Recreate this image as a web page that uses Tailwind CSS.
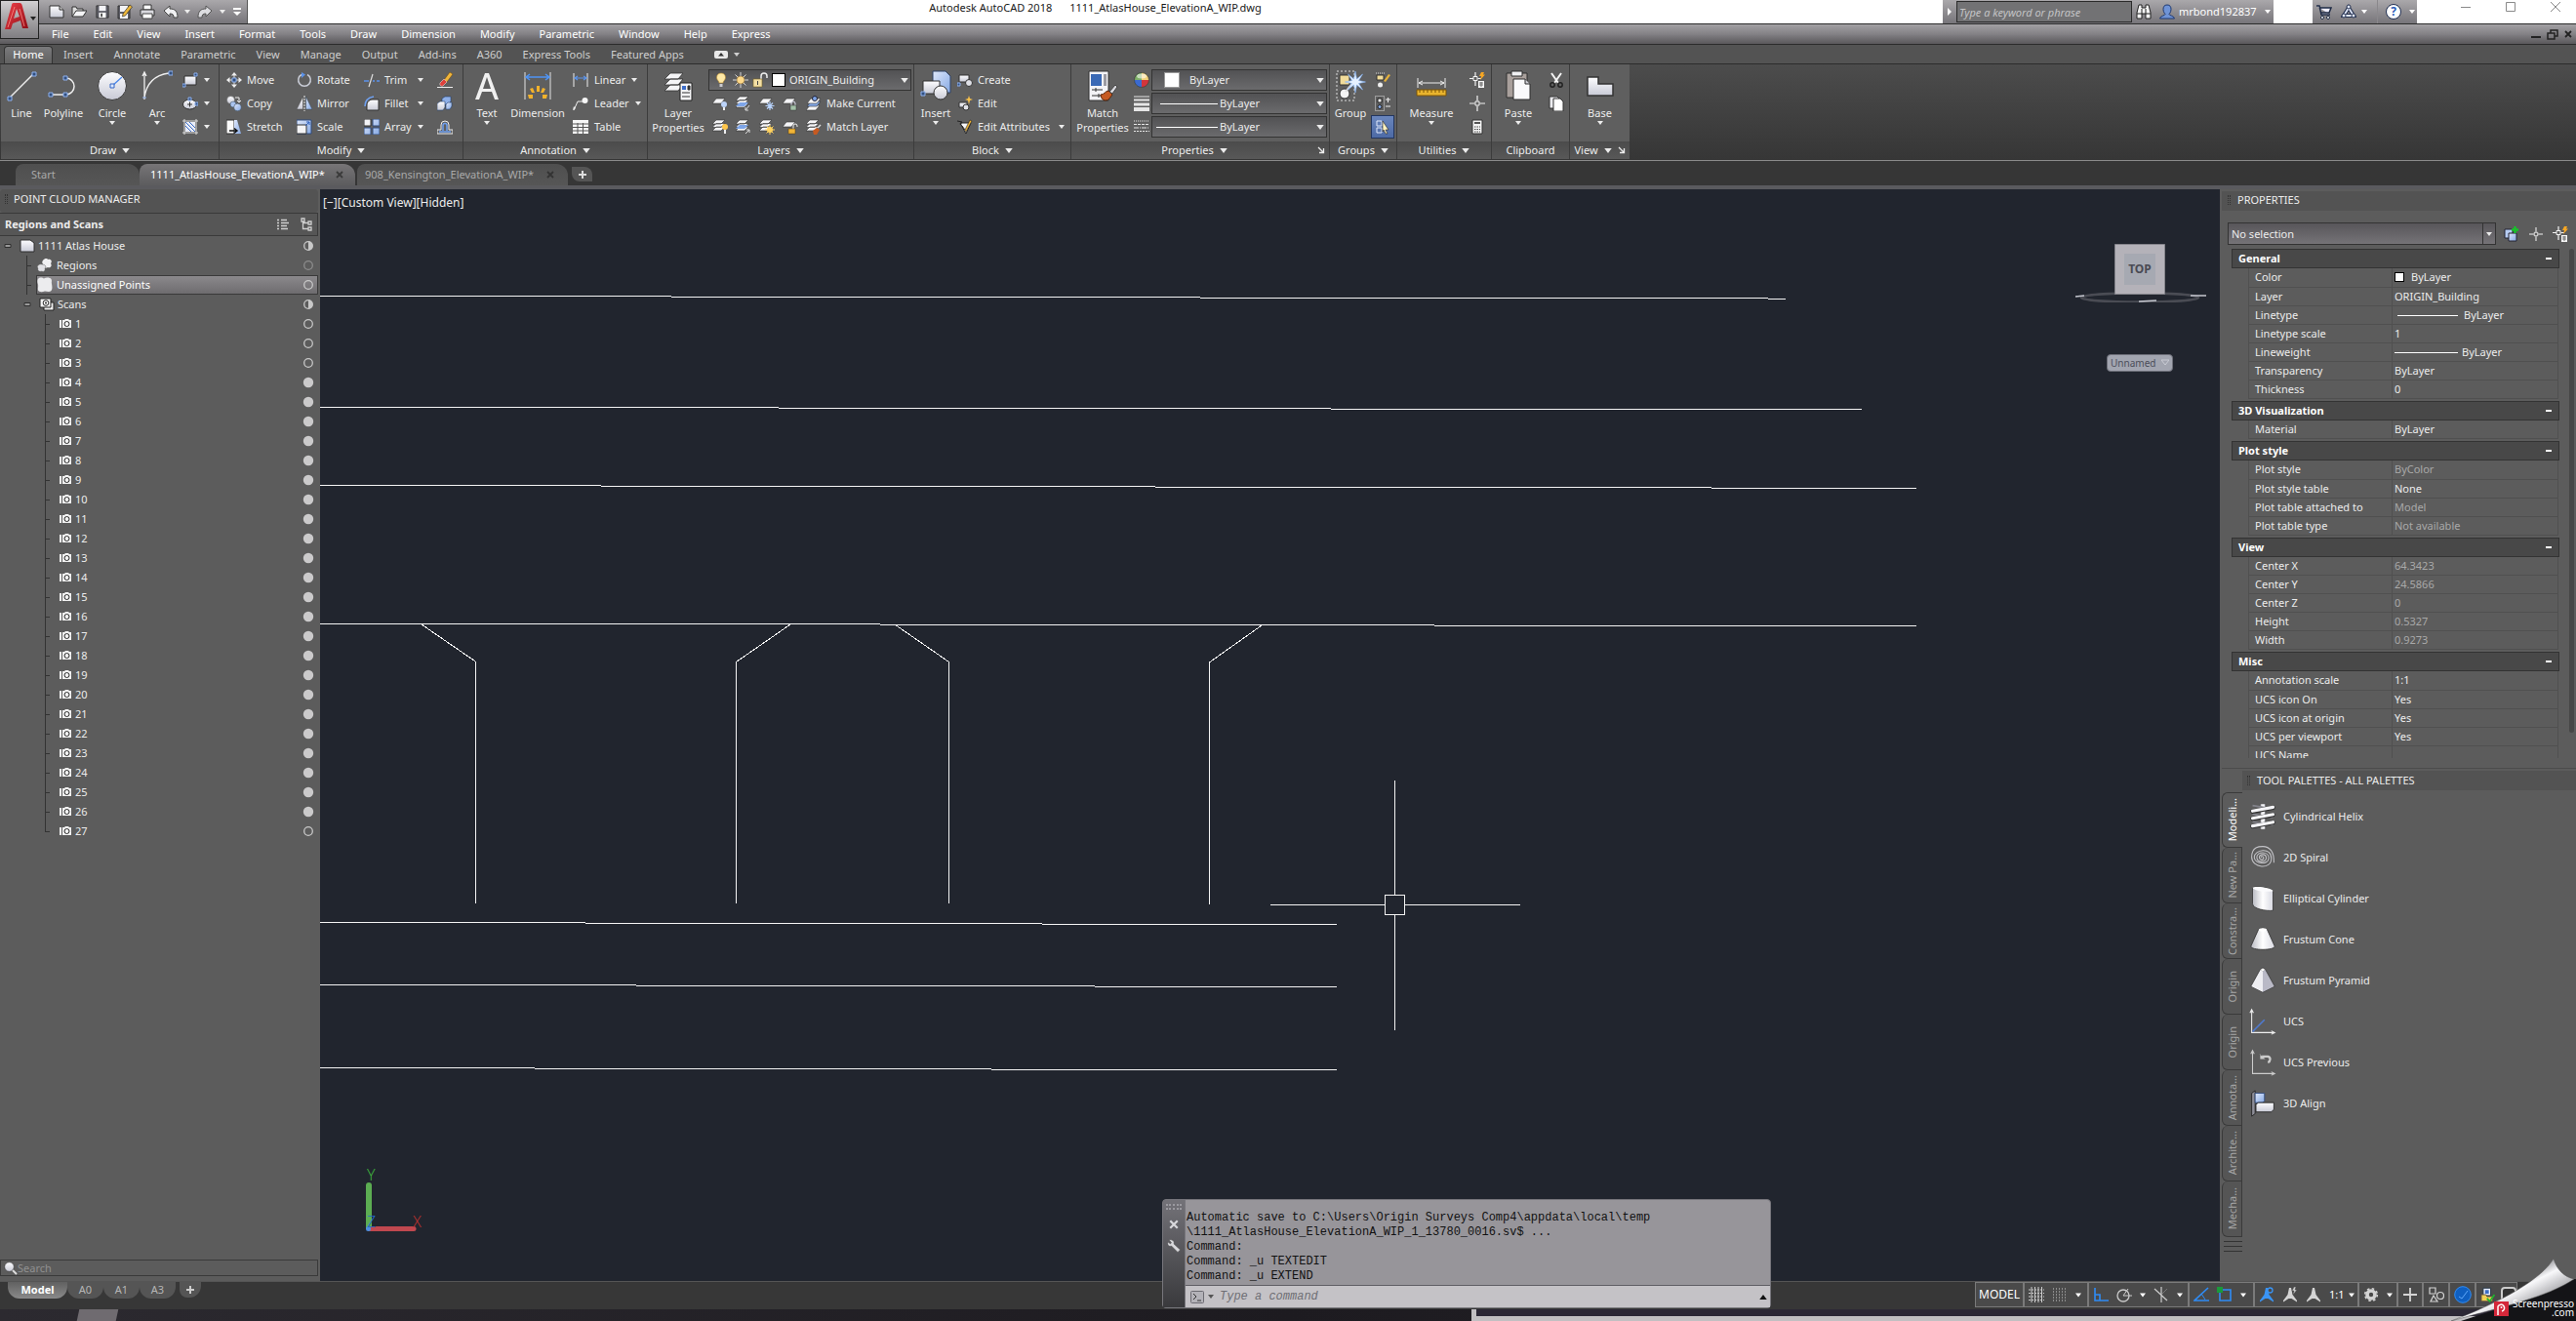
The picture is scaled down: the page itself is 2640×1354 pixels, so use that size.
<!DOCTYPE html>
<html lang="en">
<head>
    <meta charset="UTF-8">
    <meta name="viewport" content="width=device-width, initial-scale=1.0">
    <title>Autodesk AutoCAD 2018 - 1111_AtlasHouse_ElevationA_WIP.dwg</title>
    <script src="https://cdn.jsdelivr.net/npm/@tailwindcss/browser@4"></script>
</head>
<body class="flex h-screen flex-col overflow-hidden bg-[#5c5c5c] font-['Noto_Sans','Open_Sans',sans-serif] text-[11px] leading-4 text-[#ececec]">

    <!-- Icon sprite -->
    <svg class="absolute size-0" aria-hidden="true">
        <defs>
            <linearGradient id="gW" x1="0" y1="0" x2="0" y2="1"><stop offset="0" stop-color="#fdfdff"/><stop offset="1" stop-color="#c8cad6"/></linearGradient>
            <linearGradient id="gB" x1="0" y1="0" x2="1" y2="1"><stop offset="0" stop-color="#dfe8fb"/><stop offset="1" stop-color="#86a9e4"/></linearGradient>
            <linearGradient id="gH" x1="0" y1="0" x2="1" y2="0"><stop offset="0" stop-color="#b9bac2"/><stop offset=".5" stop-color="#fff"/><stop offset="1" stop-color="#d8d9e2"/></linearGradient>
            <linearGradient id="gR" x1="0" y1="0" x2="1" y2="1"><stop offset="0" stop-color="#f04048"/><stop offset="1" stop-color="#8e0d16"/></linearGradient>
            <linearGradient id="gC" x1="0" y1="0" x2="1" y2="1"><stop offset="0" stop-color="#6f6f73"/><stop offset=".4" stop-color="#8f8f93"/><stop offset=".52" stop-color="#f8f8fa"/><stop offset=".7" stop-color="#a9a9ad"/><stop offset="1" stop-color="#e8e8ea"/></linearGradient>
        </defs>
        <symbol id="arrow" viewBox="0 0 6 4"><path d="M0 0h6L3 4z" fill="currentColor"/></symbol>
        <symbol id="launch" viewBox="0 0 8 8"><path d="M1 1l5 5M6.500 2v4.500h-4.500" fill="none" stroke="currentColor" stroke-width="1.300"/></symbol>
        <symbol id="close" viewBox="0 0 8 8"><path d="M1 1l6 6M7 1l-6 6" stroke="currentColor" stroke-width="1.800"/></symbol>

        <!-- quick access -->
        <symbol id="new" viewBox="0 0 16 16"><path d="M1 2h10l4 4v8H1z" fill="url(#gW)" stroke="#333"/><path d="M11 2v4h4" fill="#ccc" stroke="#333"/></symbol>
        <symbol id="open" viewBox="0 0 16 16"><path d="M1 13V3h4l1 2h6v2" fill="#ddd" stroke="#333"/><path d="M1 13L5 7h11l-4 6z" fill="#f4f4f6" stroke="#333"/></symbol>
        <symbol id="save" viewBox="0 0 16 16"><path d="M1 1h14v14H1z" fill="#5d5d66" stroke="#333"/><path d="M4 1h8v6H4z" fill="#f3f3f6"/><path d="M4 9h8v6H4z" fill="#fff"/><path d="M6 10h2v4H6z" fill="#444"/></symbol>
        <symbol id="saveas" viewBox="0 0 16 16"><path d="M1 2h12v13H1z" fill="#5d5d66" stroke="#333"/><path d="M3 2h8v6H3zM3 10h8v5H3z" fill="#f3f3f6"/><path d="M6 10l7-9 2.500 2-7 9-3 1z" fill="#ecb63a" stroke="#333" stroke-width=".7"/></symbol>
        <symbol id="print" viewBox="0 0 16 16"><path d="M4 1h8v5H4z" fill="#fff" stroke="#333"/><path d="M1 6h14v6H1z" fill="#d9d9de" stroke="#333"/><path d="M3 10h10v5H3z" fill="#fff" stroke="#444"/></symbol>
        <symbol id="undo" viewBox="0 0 16 16"><path d="M1 7l6-5v3c5 0 8 2 8 9h-4c0-3-1-4-4-4v3z" fill="#f0f0f2" stroke="#444"/></symbol>
        <symbol id="redo" viewBox="0 0 16 16"><path d="M15 7L9 2v3c-5 0-8 2-8 9h4c0-3 1-4 4-4v3z" fill="#dcdce0" stroke="#555"/></symbol>
        <symbol id="qatmore" viewBox="0 0 8 8"><path d="M0 0h8v2H0zM0 4h8L4 8z" fill="#fff"/></symbol>
        <symbol id="binoculars" viewBox="0 0 16 16"><path d="M3 1h3v3h4V1h3l2 8v6h-5v-5H6v5H1V9z" fill="#f4f4f4" stroke="#222"/><path d="M6 5v5M10 5v5M1 10h5M10 10h5" stroke="#222"/></symbol>
        <symbol id="user" viewBox="0 0 16 16"><path d="M8 1c3 0 4 2 4 4.500S10.500 10 10 10.500c0 1.500 5 1.500 5.500 4.500H.5c.5-3 5.500-3 5.500-4.500C5.500 10 4 8 4 5.500S5 1 8 1z" fill="#6f93d6" stroke="#1d3770"/></symbol>
        <symbol id="cart" viewBox="0 0 16 16"><path d="M0 2h3l2 9h9M4 4h11l-2 5H5" fill="#eef" stroke="#1e2a44" stroke-width="1.500"/><circle cx="6" cy="14" r="1.500" fill="#fff" stroke="#1e2a44"/><circle cx="12" cy="14" r="1.500" fill="#fff" stroke="#1e2a44"/></symbol>
        <symbol id="a360" viewBox="0 0 16 16"><path d="M8 4l5 8H3z" fill="none" stroke="#26324f" stroke-width="4"/><path d="M8 4l5 8H3z" fill="none" stroke="#dfe6f8" stroke-width="1.800"/><circle cx="8" cy="3" r="2" fill="#dfe6f8" stroke="#26324f"/><circle cx="3" cy="12" r="2" fill="#dfe6f8" stroke="#26324f"/><circle cx="13" cy="12" r="2" fill="#dfe6f8" stroke="#26324f"/></symbol>

        <!-- large ribbon icons -->
        <symbol id="line" viewBox="0 0 32 32"><path d="M4 28L28 4" stroke="#eee" stroke-width="1.500"/><path d="M2 27h4v4H2zM27 2h4v4h-4z" fill="#33507f" stroke="#8fb2f0"/></symbol>
        <symbol id="polyline" viewBox="0 0 32 32"><path d="M3 25h15c12 0 12-17 0-17" fill="none" stroke="#eee" stroke-width="1.500"/><path d="M1 23h4v4H1zM16 23h4v4h-4zM16 6h4v4h-4z" fill="#33507f" stroke="#8fb2f0"/></symbol>
        <symbol id="circle" viewBox="0 0 32 32"><circle cx="16" cy="16" r="14.500" fill="url(#gW)" stroke="#3b3b3b"/><path d="M16 16L26 7" stroke="#4a86e8" stroke-width="1.300"/><path d="M14 14h4v4h-4z" fill="#dce8ff" stroke="#3567c4"/></symbol>
        <symbol id="arc" viewBox="0 0 32 32"><path d="M3 30V3M1 6l2-4 2 4M3 28C5 14 13 5 28 3" fill="none" stroke="#eee" stroke-width="1.300"/><path d="M28 1h4v4h-4zM1 28h4" fill="#33507f" stroke="#8fb2f0"/></symbol>
        <symbol id="text" viewBox="0 0 32 32"><path d="M4 30L14 3h4l10 27h-4l-3-8H11l-3 8zM12 19h8L16 7z" fill="#f0f0f0"/></symbol>
        <symbol id="dimension" viewBox="0 0 32 32"><path d="M3 2v28M29 2v28" stroke="#e4e4e4"/><path d="M4 7h24M8 4L4 7l4 3M24 4l4 3-4 3" fill="none" stroke="#4f94f5" stroke-width="1.500"/><path d="M15 16h3v6h-3zM8 19l3-1 2 5-3 0zM24 19l-3-1-2 5 3 0zM6 25l5 0 0 4-4 0zM26 25l-5 0 0 4 4 0z" fill="#f2b22c"/></symbol>
        <symbol id="layerprops" viewBox="0 0 32 32"><path d="M8 3h13l-5 6H2zM8 9h13l-5 6H2zM8 15h13l-5 6H2z" fill="#f5f5f7" stroke="#333" stroke-width=".8"/><path d="M18 13h12v18H18z" fill="#f5f5f7" stroke="#222"/><path d="M20 16h4v4h-4z" fill="#3d6ec9"/><path d="M26 16h2v4h-2zM20 23h8M20 27h8" stroke="#333" fill="#333"/></symbol>
        <symbol id="insert" viewBox="0 0 32 32"><path d="M13 1h13l5 5v17H13z" fill="url(#gB)" stroke="#2f4266"/><path d="M3 11h17v13H3z" fill="url(#gW)" stroke="#333"/><circle cx="21" cy="23" r="7" fill="url(#gW)" stroke="#333"/><path d="M1 22h4v4H1z" fill="#33507f" stroke="#8fb2f0"/></symbol>
        <symbol id="matchprops" viewBox="0 0 32 32"><path d="M2 1h20v30H2z" fill="#f3f3f6" stroke="#333"/><path d="M4 4h11v12H4z" fill="#3a69b5"/><path d="M17 4h3v12h-3z" fill="#9a9aa2"/><path d="M5 20h11M5 26h11M9 18v4M12 24v4" stroke="#333"/><path d="M14 25c4 0 5-4 8-4l4 4c-2 2-3 6-7 6-3 0-5-3-5-6z" fill="#c65a22" stroke="#5b2609"/><path d="M23 22l6-7 2 2-5 7z" fill="#d9d9de" stroke="#444"/></symbol>
        <symbol id="group" viewBox="0 0 32 32"><path d="M2 1h18v30H2z" fill="none" stroke="#ddd" stroke-dasharray="2 2"/><path d="M5 5h10v10H5z" fill="#f1dc9a" stroke="#333"/><circle cx="10" cy="24" r="5" fill="#f4f4f4" stroke="#333"/><path d="M11 22l8-10" stroke="#ddd" stroke-width="2"/><path d="M21 1l1.500 8 6-5-4 6.500 7 1.500-7 1.500 4 6.500-6-5-1.500 8-1.500-8-6 5 4-6.500-7-1.500 7-1.500-4-6.500 6 5z" fill="#e6f1ff" stroke="#7fb0f5" stroke-width=".6"/></symbol>
        <symbol id="measure" viewBox="0 0 32 32"><path d="M2 8v10M30 8v10M3 13h26M7 11l-4 2 4 2M25 11l4 2-4 2" fill="none" stroke="#eee"/><path d="M1 20h30v6H1z" fill="#e9b42e" stroke="#7c5507"/><path d="M4 20v3M8 20v3M12 20v3M16 20v3M20 20v3M24 20v3M28 20v3" stroke="#7c5507"/></symbol>
        <symbol id="paste" viewBox="0 0 32 32"><path d="M4 3h21v25H4z" fill="#a9a09c" stroke="#2e2e2e"/><path d="M9 1h11v5H9z" fill="#f1f1f3" stroke="#2e2e2e"/><path d="M11 9h12l5 5v16H11z" fill="#fafafc" stroke="#2e2e2e"/><path d="M23 9v5h5" fill="#cfcfd6" stroke="#2e2e2e"/></symbol>
        <symbol id="base" viewBox="0 0 32 32"><path d="M3 7h11v7h15v12H3z" fill="url(#gW)" stroke="#333" stroke-width="1.500"/></symbol>

        <!-- small ribbon icons -->
        <symbol id="rect" viewBox="0 0 16 16"><path d="M2 4h12v9H2z" fill="url(#gW)" stroke="#2e2e2e"/><path d="M12 1h3v3h-3zM0 12h3v3H0z" fill="#33507f" stroke="#8fb2f0"/></symbol>
        <symbol id="ellipse" viewBox="0 0 16 16"><ellipse cx="7.500" cy="9" rx="7" ry="5" fill="url(#gW)" stroke="#2e2e2e"/><path d="M7.500 6.500v5M5 9h5" stroke="#333"/><path d="M6 2h3v3H6zM13 7h3v3h-3z" fill="#33507f" stroke="#8fb2f0"/></symbol>
        <symbol id="hatch" viewBox="0 0 16 16"><path d="M3 3h10v10H3z" fill="#e9edf8"/><path d="M3 7l6 6M3 3l10 10M7 3l6 6" stroke="#3b6cc5"/><path d="M2 0v16M14 0v16M0 2h16M0 14h16" stroke="#ddd"/></symbol>
        <symbol id="move" viewBox="0 0 16 16"><path d="M8 0l3 3.500H5zM8 16l3-3.500H5zM0 8l3.500-3v6zM16 8l-3.500-3v6z" fill="#eee"/><path d="M8 3v10M3 8h10" stroke="#ddd"/><path d="M6 6h4v4H6z" fill="#33507f" stroke="#8fb2f0"/></symbol>
        <symbol id="copy" viewBox="0 0 16 16"><circle cx="4.500" cy="4.500" r="4" fill="url(#gW)" stroke="#444" stroke-width=".5"/><circle cx="7" cy="9" r="3" fill="#a9c3ef" stroke="#345" stroke-width=".5"/><circle cx="11.500" cy="12" r="3.800" fill="url(#gB)" stroke="#345" stroke-width=".5"/><path d="M9 2h4v4M11 5l2 2 2-2" fill="none" stroke="#eee"/></symbol>
        <symbol id="stretch" viewBox="0 0 16 16"><path d="M0 1h8v14H0z" fill="#fafafa" stroke="#333"/><path d="M8 1l3 0 4 14H8z" fill="url(#gB)"/><path d="M3 12h7M8 9.500l3 2.500-3 2.500" stroke="#111" stroke-width="1.500" fill="none"/></symbol>
        <symbol id="rotate" viewBox="0 0 16 16"><path d="M11 2.500a6.300 6.300 0 1 1-6 0" fill="none" stroke="#c9ccd6" stroke-width="1.500"/><path d="M5 0l4 2.500L5 6z" fill="#5c93ea"/></symbol>
        <symbol id="mirror" viewBox="0 0 16 16"><path d="M6.500 1v13H0z" fill="url(#gW)" stroke="#444" stroke-width=".5"/><path d="M9.500 1v13H16z" fill="url(#gB)" stroke="#345" stroke-width=".5"/><path d="M8 0v16" stroke="#eee" stroke-dasharray="2 1"/></symbol>
        <symbol id="scale" viewBox="0 0 16 16"><path d="M0 1h15v14H0z" fill="url(#gB)" stroke="#2f4a7c"/><path d="M0 6h10v9H0z" fill="#f4f4f6" stroke="#333"/><path d="M9 7l4-4M10 3h3v3" stroke="#2a5dbb" fill="none"/></symbol>
        <symbol id="trim" viewBox="0 0 16 16"><path d="M0 9h5M9 9h2M13 9h3" stroke="#5c93ea" stroke-width="1.500"/><path d="M9 2L5 15" stroke="#ddd" stroke-width="1.200"/></symbol>
        <symbol id="fillet" viewBox="0 0 16 16"><path d="M3 15V10c0-4 3-6 6-6h6v11z" fill="url(#gW)" stroke="#333"/><path d="M1 11c0-6 3-9 9-10" fill="none" stroke="#6fa0f0" stroke-width="1.500"/></symbol>
        <symbol id="array" viewBox="0 0 16 16"><path d="M0 0h7v7H0z" fill="#f3f3f6" stroke="#333"/><path d="M9 0h7v7H9zM0 9h7v7H0zM9 9h7v7H9z" fill="url(#gB)" stroke="#2f4a7c"/></symbol>
        <symbol id="erase" viewBox="0 0 16 16"><path d="M7 8l6-8 3 2-6 8z" fill="#f0b63c" stroke="#6d4408" stroke-width=".5"/><path d="M3 11l4-4 3 3-4 4c-2 1-4-1-3-3z" fill="#e0403a" stroke="#eee" stroke-width=".5"/><path d="M0 15.500h16" stroke="#eee"/></symbol>
        <symbol id="explode" viewBox="0 0 16 16"><path d="M5 3l3-2h6v5l-3 3H5z" fill="#8fb0e8" stroke="#24406f" stroke-width=".6"/><path d="M0 8l3-2h5v6l-2 3H0z" fill="url(#gW)" stroke="#24406f" stroke-width=".6"/><path d="M9 9l2-2h4v4l-2 3H9z" fill="url(#gB)" stroke="#24406f" stroke-width=".6"/></symbol>
        <symbol id="offset" viewBox="0 0 16 16"><path d="M0 15h16v-4h-4V6a4 4 0 0 0-8 0v5H0z" fill="none" stroke="#eee"/><path d="M2 13h12M6 12V6.500a2 2 0 0 1 4 0V12" fill="none" stroke="#6fa0f0" stroke-width="1.500"/></symbol>
        <symbol id="linear" viewBox="0 0 16 16"><path d="M1 1v14M15 1v14" stroke="#eee"/><path d="M2 6h12M5 4L2 6l3 2M11 4l3 2-3 2" fill="none" stroke="#5c93ea" stroke-width="1.200"/></symbol>
        <symbol id="leader" viewBox="0 0 16 16"><path d="M1 15L5 6h5" fill="none" stroke="#eee"/><circle cx="12.500" cy="5" r="3" fill="#f6f6f6"/><path d="M0 15l1-4 2 2z" fill="#eee"/></symbol>
        <symbol id="table" viewBox="0 0 16 16"><path d="M0 1h16v14H0z" fill="#f7f7f7"/><path d="M0 5h16M0 8.500h16M0 12h16M5 4v11M10.500 4v11" stroke="#555"/></symbol>
        <symbol id="bulb" viewBox="0 0 16 16"><path d="M8 1c3 0 4.500 2 4.500 4.500S10 9 10 11H6c0-2-2.500-3-2.500-5.500S5 1 8 1z" fill="#ffe9a6" stroke="#b88a2c" stroke-width=".6"/><path d="M6.500 12h3v3h-3z" fill="#c9c9cf"/></symbol>
        <symbol id="sun" viewBox="0 0 16 16"><path d="M8 0v16M0 8h16M2.500 2.500l11 11M13.500 2.500l-11 11" stroke="#d8d8d8"/><circle cx="8" cy="8" r="4" fill="#ffd98a" stroke="#8a6a35" stroke-width=".6"/></symbol>
        <symbol id="unlock" viewBox="0 0 16 16"><path d="M9 8V4a3 3 0 0 1 6 0v2" fill="none" stroke="#eee" stroke-width="1.500"/><path d="M1 7h9v8H1z" fill="#f3dfa5" stroke="#7c6420" stroke-width=".6"/><path d="M5 9h1v4H5z" fill="#444"/></symbol>
        <symbol id="sheet" viewBox="0 0 16 16"><path d="M4 3h9l-4 5H0z" fill="#f5f5f7" stroke="#333" stroke-width=".6"/></symbol>
        <symbol id="sheets" viewBox="0 0 16 16"><path d="M4 8h9l-4 4H0zM4 4.500h9l-4 4H0zM4 1h9L9 5H0z" fill="#f5f5f7" stroke="#333" stroke-width=".6"/></symbol>
        <symbol id="lay1" viewBox="0 0 16 16"><use href="#sheet"/><circle cx="12" cy="9" r="3" fill="#bcd3f8"/><path d="M11 12h2v3h-2z" fill="#eee"/></symbol>
        <symbol id="lay2" viewBox="0 0 16 16"><use href="#sheets"/><path d="M4 7h9l-4 4H0z" fill="#7ea5e8"/><path d="M14 10l-4 5M10 12v3h3" fill="none" stroke="#ddd"/></symbol>
        <symbol id="lay3" viewBox="0 0 16 16"><use href="#sheet"/><path d="M11 6v9M6.500 10.500h9M8 7.500l6 6M14 7.500l-6 6" stroke="#b7d2fb" stroke-width="1.200"/></symbol>
        <symbol id="lay4" viewBox="0 0 16 16"><use href="#sheet"/><path d="M9 10V8a2 2 0 0 1 4 0v2" fill="none" stroke="#dde"/><path d="M8 10h6v5H8z" fill="#a3c0a8" stroke="#333" stroke-width=".5"/></symbol>
        <symbol id="lay5" viewBox="0 0 16 16"><path d="M4 10h10l-4 5H0z" fill="#f5f5f7" stroke="#333" stroke-width=".6"/><path d="M5 6h10l-4 5H1z" fill="#85a9e8" stroke="#333" stroke-width=".6"/><path d="M5 3h10l-4 5H1z" fill="#f5f5f7" stroke="#333" stroke-width=".6"/><circle cx="9" cy="3" r="2.500" fill="#7ea5e8" stroke="#223"/></symbol>
        <symbol id="lay6" viewBox="0 0 16 16"><use href="#sheets"/><circle cx="13" cy="8" r="3" fill="#ffc64a"/><path d="M12 11h2v4h-2z" fill="#eee"/></symbol>
        <symbol id="lay7" viewBox="0 0 16 16"><use href="#sheets"/><path d="M4 6h9l-4 4H0z" fill="#7ea5e8"/><path d="M10 15l4-4M11 11h3v3" fill="none" stroke="#ddd"/></symbol>
        <symbol id="lay8" viewBox="0 0 16 16"><use href="#sheets"/><path d="M11 6v10M6 11h10M7.500 7.500l7 7M14.500 7.500l-7 7" stroke="#ffd25e"/><circle cx="11" cy="11" r="3" fill="#ffd25e"/></symbol>
        <symbol id="lay9" viewBox="0 0 16 16"><use href="#sheet"/><path d="M11 10V7a2 2 0 0 1 4 0v1" fill="none" stroke="#eee"/><path d="M6 10h7v5H6z" fill="#f0b437" stroke="#5c3d05" stroke-width=".5"/></symbol>
        <symbol id="lay10" viewBox="0 0 16 16"><use href="#sheets"/><path d="M7 12l4-3 3 2-3 5H8z" fill="#c65a22"/><path d="M12 9l3-3" stroke="#ddd" stroke-width="1.500"/></symbol>
        <symbol id="blkcreate" viewBox="0 0 16 16"><path d="M2 3h10v7H2z" fill="url(#gW)" stroke="#333"/><circle cx="12" cy="11" r="3.500" fill="#dfe0e6" stroke="#333"/><path d="M0 11h3v3H0z" fill="#33507f" stroke="#8fb2f0"/></symbol>
        <symbol id="blkedit" viewBox="0 0 16 16"><path d="M2 7h8v5H2z" fill="url(#gW)" stroke="#333"/><circle cx="9" cy="12" r="3" fill="#dfe0e6" stroke="#333"/><path d="M12 0l1 3 3 1-3 1-1 4-1-4-3-1 3-1z" fill="#f7c14b"/></symbol>
        <symbol id="blkattr" viewBox="0 0 16 16"><path d="M3 4h11l-5 11z" fill="#f5f5f7" stroke="#222"/><path d="M5 7l3 4 5-10 2 1-6 11z" fill="#f0b437" stroke="#222" stroke-width=".6"/><path d="M0 2l5 1-2 3" fill="none" stroke="#222"/></symbol>
        <symbol id="wheel" viewBox="0 0 16 16"><circle cx="8" cy="8" r="7.500" fill="#7fb069"/><path d="M8 8V.5A7.500 7.500 0 0 1 15.500 8z" fill="#f3d27a"/><path d="M8 8h7.500A7.500 7.500 0 0 1 8 15.500z" fill="#d2353c"/><path d="M8 8v7.500A7.500 7.500 0 0 1 .5 8z" fill="#3b6ad0"/><ellipse cx="8" cy="4" rx="5" ry="2.500" fill="#fff" fill-opacity=".55"/><circle cx="8" cy="8" r="7.500" fill="none" stroke="#333" stroke-width=".6"/></symbol>
        <symbol id="weights" viewBox="0 0 16 16"><path d="M0 1h16" stroke="#e6e6e6"/><path d="M0 4.500h16" stroke="#e6e6e6" stroke-width="2"/><path d="M0 9h16" stroke="#e6e6e6" stroke-width="3"/><path d="M0 14h16" stroke="#e6e6e6" stroke-width="4"/></symbol>
        <symbol id="ltypes" viewBox="0 0 16 16"><path d="M0 2h16" stroke="#e6e6e6" stroke-dasharray="1 1"/><path d="M0 5.500h16" stroke="#e6e6e6" stroke-dasharray="3 1"/><path d="M0 9h16" stroke="#e6e6e6" stroke-dasharray="5 1 1 1"/><path d="M0 12.500h16" stroke="#e6e6e6" stroke-dasharray="2 1"/></symbol>
        <symbol id="grp1" viewBox="0 0 16 16"><path d="M1 1h9" stroke="#ddd" stroke-dasharray="1 1"/><path d="M2 3h7v5H2z" fill="#f1dc9a" stroke="#333"/><circle cx="5.500" cy="13" r="2.500" fill="#eee"/><path d="M9 9l5-7 2 1-5 7z" fill="#e5b13a"/></symbol>
        <symbol id="grp2" viewBox="0 0 16 16"><path d="M.5.5h9v15h-9z" fill="none" stroke="#ddd" stroke-dasharray="1 1"/><path d="M3 3h4v4H3z" fill="#eee" stroke="#222"/><circle cx="5" cy="11.500" r="2" fill="#86a9e4" stroke="#222"/><path d="M11 4h5M13.500 2v5M11 11h5" stroke="#eee"/></symbol>
        <symbol id="grp3" viewBox="0 0 16 16"><path d="M2 2h5v5H2zM2 9h5v5H2z" fill="none" stroke="#dfe8fb"/><path d="M8 2l6 9-3 0 2 4-2 0-2-4-1 2z" fill="#fff3c2" stroke="#222" stroke-width=".6"/></symbol>
        <symbol id="qselect" viewBox="0 0 16 16"><path d="M6 0v4M6 9v5M0 6.500h4M8.500 6.500H12" stroke="#f2f2f2" stroke-width="1.200"/><path d="M4 4.500h4v4H4z" fill="none" stroke="#f2f2f2"/><path d="M9 9h6v7H9z" fill="#f5f5f5"/><path d="M10 11h4M10 13h4M12 10v5" stroke="#444" stroke-width=".7"/><path d="M12 0h3l-1 2.500h2L11 8l1-4h-2z" fill="#f6a623"/></symbol>
        <symbol id="pick" viewBox="0 0 16 16"><path d="M8 0v5.500M8 10.500V16M0 8h5.500M10.500 8H16" stroke="#f2f2f2" stroke-width="1.200"/><path d="M6 6h4v4H6z" fill="none" stroke="#f2f2f2"/></symbol>
        <symbol id="calc" viewBox="0 0 16 16"><path d="M3 1h10v14H3z" fill="#f3f3f3" stroke="#333"/><path d="M5 3h6v2H5z" fill="#555"/><path d="M5 8h6M5 10.500h6M5 13h6" stroke="#444" stroke-dasharray="1.500 1"/></symbol>
        <symbol id="cut" viewBox="0 0 16 16"><path d="M3 1l7 10M13 1L6 11" stroke="#f4f4f4" stroke-width="2"/><circle cx="4" cy="13" r="2.200" fill="none" stroke="#222" stroke-width="1.500"/><circle cx="12" cy="13" r="2.200" fill="none" stroke="#222" stroke-width="1.500"/></symbol>
        <symbol id="copyclip" viewBox="0 0 16 16"><path d="M1 1h8l2 2v10H1z" fill="#ececf0" stroke="#333"/><path d="M5 3h7l3 3v10H5z" fill="#fff" stroke="#333"/></symbol>

        <!-- palettes -->
        <symbol id="listview" viewBox="0 0 12 12"><path d="M0 1.500h2M0 4.500h2M0 7.500h2M0 10.500h2M4 1.500h6M4 4.500h8M4 7.500h6M4 10.500h7" stroke="#cfcfcf" stroke-width="1.600"/></symbol>
        <symbol id="treeview" viewBox="0 0 12 14"><path d="M1 1h3v3H1zM8 4h3v3H8zM8 10h3v3H8zM2.500 4v7.500H8M2.500 5.500H8" fill="none" stroke="#cfcfcf" stroke-width="1.300"/></symbol>
        <symbol id="scanfile" viewBox="0 0 16 14"><path d="M1 1h10l4 3v9H1z" fill="url(#gW)" stroke="#2e2e2e"/></symbol>
        <symbol id="regions" viewBox="0 0 16 16"><path d="M6 3c2-3 5-2 5-1 3-1 5 2 3 4 2 3-1 5-3 4-3 2-6 0-5-3-1-2-1-3 0-4z" fill="#f1f1f3"/><path d="M1 8c2-2 4-1 4-1 3 0 5 2 3 4 1 3-2 4-3 3-3 1-5-1-4-3-1-1-1-2 0-3z" fill="#e0e0e4" stroke="#555" stroke-width=".5"/></symbol>
        <symbol id="points" viewBox="0 0 16 16"><path d="M2 1c2-1 4 0 5 .5C9 0 13 0 14.500 2c1 2 0 3 .5 5 .5 3 1 6-1 7.500-2 1-4 0-6 0-3 1-6 1-7-1-.5-2 .5-4 0-6C0 5 0 2 2 1z" fill="#ececee"/></symbol>
        <symbol id="scans" viewBox="0 0 16 16"><path d="M5 6h10v8H5z" fill="#eee" stroke="#222"/><path d="M1 2h11v9H1z" fill="#f2f2f2" stroke="#222"/><circle cx="7" cy="6.500" r="2.800" fill="#fff" stroke="#222"/><circle cx="7" cy="6.500" r="1" fill="#222"/></symbol>
        <symbol id="scan" viewBox="0 0 12 12"><path d="M0 2h2v8H0zM3 2h2l1-1h3l1 1h2v8H3z" fill="#f2f2f2"/><circle cx="7.500" cy="6" r="2.500" fill="#f2f2f2" stroke="#2a2a2a"/></symbol>
        <symbol id="ringOff" viewBox="0 0 12 12"><circle cx="6" cy="6" r="4.300" fill="none" stroke="#c8c8c8" stroke-width="1.300"/></symbol>
        <symbol id="ringDim" viewBox="0 0 12 12"><circle cx="6" cy="6" r="4.300" fill="none" stroke="#8d8d8d" stroke-width="1.300"/></symbol>
        <symbol id="ringOn" viewBox="0 0 12 12"><circle cx="6" cy="6" r="5.200" fill="#cbcacb"/></symbol>
        <symbol id="ringHalf" viewBox="0 0 12 12"><circle cx="6" cy="6" r="4.300" fill="none" stroke="#c8c8c8" stroke-width="1.300"/><path d="M6 1.500a4.500 4.500 0 0 1 0 9z" fill="#c8c8c8"/></symbol>
        <symbol id="magnifier" viewBox="0 0 14 14"><circle cx="5.500" cy="5.500" r="4.800" fill="url(#gW)" stroke="#333" stroke-width=".6"/><path d="M9 9l4 4" stroke="#ddd" stroke-width="2"/></symbol>
        <symbol id="pickadd" viewBox="0 0 16 16"><path d="M1 3h8v9H1z" fill="#b7cdf3" stroke="#223"/><path d="M5 7h8v8H5z" fill="url(#gB)" stroke="#223"/><path d="M11.500 0v7M8 3.500h7" stroke="#17c22a" stroke-width="2.400"/></symbol>
        <symbol id="tHelix" viewBox="0 0 32 32"><path d="M13 1h6v30h-6z" fill="url(#gH)" stroke="#444" stroke-width=".6"/><path d="M4 3l24 4M4 13l24 4M4 22l24 4" stroke="#83838b" stroke-width="2"/><path d="M4 10l24-4.500M4 18.500L28 14M4 27.500L28 23" stroke="#2e2e2e" stroke-width="5" stroke-linecap="round"/><path d="M4 9.500L28 5M4 18L28 13.500M4 27L28 22.500" stroke="#f5f5f8" stroke-width="3.600" stroke-linecap="round"/></symbol>
        <symbol id="tSpiral" viewBox="0 0 32 32"><path d="M14 16c0-2 3-2 3 .5s-5 3-5-1 8-4.500 8 1-11 6-11-1S23 8 23 16.500 6 24 6 15.500 26 3 26 17 3 28 3 15.500 12 3 16 3M16 3c8 0 13.500 6 13 19" fill="none" stroke="#c4c4c8" stroke-width="1.200"/></symbol>
        <symbol id="tEllip" viewBox="0 0 32 32"><path d="M4 3c4-2 22 0 24 4v23C20 31 4 28 4 22z" fill="url(#gH)" stroke="#3c3c3c"/><path d="M4 3c4-2 22 0 24 4C20 9 6 7 4 3z" fill="#fbfbfd"/></symbol>
        <symbol id="tCone" viewBox="0 0 32 32"><path d="M11 4c2-2 8-2 10 0l9 20c0 5-28 5-28 0z" fill="url(#gH)" stroke="#333"/><ellipse cx="16" cy="4.500" rx="4.500" ry="2" fill="#fff"/></symbol>
        <symbol id="tPyramid" viewBox="0 0 32 32"><path d="M13 3L2 23l14 7V5z" fill="#eeeef2"/><path d="M19 3l11 20-14 7V5z" fill="#b9b9c6"/><path d="M13 3l3-2 3 2-3 2z" fill="#fff"/><path d="M13 3L2 23l14 7 14-7L19 3l-3-2z" fill="none" stroke="#333" stroke-width=".8"/></symbol>
        <symbol id="tUcs" viewBox="0 0 32 32"><path d="M3 3v26h26M1 6l2-4 2 4M26 27l4 2-4 2" fill="none" stroke="#eee" stroke-width="1.200"/><path d="M4 28L18 14" stroke="#4f7ad0" stroke-width="1.800"/></symbol>
        <symbol id="tUcsPrev" viewBox="0 0 32 32"><path d="M4 3v26h26M2 6l2-4 2 4M26 27l4 2-4 2" fill="none" stroke="#ccc" stroke-width="1.200"/><path d="M15 9h7c4 1 3 6 0 7" fill="none" stroke="#ccc" stroke-width="2.500"/><path d="M12 6h1v6h6z" fill="#ccc"/></symbol>
        <symbol id="tAlign" viewBox="0 0 32 32"><path d="M3 4l4-3v27l-4 3z" fill="#8e8e98" stroke="#222"/><path d="M7 4h11v9l-2 2H7z" fill="url(#gB)" stroke="#2f4a7c"/><path d="M8 17l3-2h18v8l-3 3H8z" fill="url(#gW)" stroke="#222"/></symbol>
        <symbol id="wrench" viewBox="0 0 14 14"><path d="M2 1l2.500 2.500L3.500 5 1 3c-1 3 1 5 3.500 4L11 13.500 13.500 11 7 5c1-3-2-5-5-4z" fill="#d8d8dc" stroke="#555" stroke-width=".5"/></symbol>

        <!-- status bar -->
        <symbol id="sGrid" viewBox="0 0 16 16"><path d="M3 0v16M6.500 0v16M10 0v16M13.500 0v16" stroke="#ccc"/><path d="M0 3h16M0 6.500h16M0 10h16M0 13.500h16" stroke="#ccc" stroke-dasharray="2 1"/></symbol>
        <symbol id="sSnap" viewBox="0 0 16 16"><path d="M1 2h15M1 5h15M1 8h15M1 11h15M1 14h15" stroke="#ccc" stroke-dasharray="1 2"/></symbol>
        <symbol id="sOrtho" viewBox="0 0 16 16"><path d="M2 1v13h14M2 8h5v6" fill="none" stroke="#2f8cf5" stroke-width="1.600"/></symbol>
        <symbol id="sPolar" viewBox="0 0 16 16"><circle cx="7" cy="9" r="6" fill="none" stroke="#ccc" stroke-width="1.300"/><path d="M7 9h9M7 9l5-7" stroke="#ccc"/></symbol>
        <symbol id="sIso" viewBox="0 0 16 16"><path d="M8 0v16M1 2l13 12" stroke="#ccc" stroke-width="1.200"/><path d="M14 2L9 7" stroke="#777"/></symbol>
        <symbol id="sTrack" viewBox="0 0 16 16"><path d="M15 1L1 14h15" fill="none" stroke="#2f8cf5" stroke-width="1.700"/><path d="M8 7l4 6" stroke="#2f8cf5"/></symbol>
        <symbol id="sOsnap" viewBox="0 0 16 16"><path d="M3 3h11v11H3z" fill="none" stroke="#2f8cf5" stroke-width="1.600"/><path d="M0 0h6v6H0z" fill="#1a9a3b"/></symbol>
        <symbol id="sAnno" viewBox="0 0 16 16"><path d="M7 1h2l1.500 7 4.500 6v1.500L9.500 12h-3L1 15.500V14l4.500-6z" fill="currentColor"/></symbol>
        <symbol id="sAnnoVis" viewBox="0 0 16 16"><use href="#sAnno"/><circle cx="11.500" cy="3.500" r="2.500" fill="#4a4a4a" stroke="currentColor" stroke-width="1.300"/></symbol>
        <symbol id="sAnnoAuto" viewBox="0 0 16 16"><use href="#sAnno"/><path d="M12 0l-2 4h2l-1 4 4-5h-2l1-3z" fill="currentColor" stroke="#4a4a4a" stroke-width=".5"/></symbol>
        <symbol id="sGear" viewBox="0 0 16 16"><circle cx="8" cy="8" r="4" fill="none" stroke="#d4d4d4" stroke-width="3.600"/><circle cx="8" cy="8" r="6.300" fill="none" stroke="#d4d4d4" stroke-width="1.600" stroke-dasharray="2.500 2.450"/></symbol>
        <symbol id="sPlus" viewBox="0 0 16 16"><path d="M8 1v14M1 8h14" stroke="#d4d4d4" stroke-width="1.800"/></symbol>
        <symbol id="sIsolate" viewBox="0 0 16 16"><path d="M1 1h6v6H1zM5 9l4 6H2z" fill="none" stroke="#d4d4d4" stroke-width="1.200"/><circle cx="12" cy="9" r="3.500" fill="none" stroke="#d4d4d4" stroke-width="1.200"/></symbol>
        <symbol id="sPerf" viewBox="0 0 18 18"><circle cx="9" cy="9" r="8.300" fill="#0f5fc0" stroke="#2f8cf5"/><path d="M5 11l3 2 6-8" fill="none" stroke="#5fa8fb"/></symbol>
        <symbol id="sTrust" viewBox="0 0 16 16"><path d="M3 1h8v8H3z" fill="#e8eefc" stroke="#234"/><path d="M5 3h4v4H5z" fill="#3b6cc5"/><path d="M1 8h5l1 2h6v5H1z" fill="#f2cf52" stroke="#654"/><path d="M7 12l3 3 5-7" fill="none" stroke="#1fb32f" stroke-width="1.800"/></symbol>
    </svg>

    <!-- Title bar -->
    <header class="flex h-6 shrink-0 bg-white">
        <div class="flex items-stretch">
            <button aria-label="Application menu" class="relative z-10 flex h-10 w-10 items-start border border-[#222] bg-linear-to-b from-[#d2d0d2] via-[#a5a3a6] to-[#807e82] text-[#222]">
                <svg class="ml-0.5 h-8 w-7" viewBox="0 0 28 32"><path d="M2 29L9 4c.5-2 1-2 3-2h5c2 0 2 1 2.500 2L26 28h-6l-2-8-8 3-2 6zM14 8l-3 10 6-2z" fill="url(#gR)"/><path d="M5 27L12 6M22 26L17 8" stroke="#ff8a86" stroke-width=".8"/></svg>
                <svg class="mt-4 h-1 w-1.5"><use href="#arrow"/></svg>
            </button>
            <div class="flex w-[214px] items-center border-r border-[#555] bg-linear-to-b from-[#aaa8ab] to-[#77757a] pl-1.5">
                <button aria-label="New" class="flex w-6 justify-center"><svg class="size-4"><use href="#new"/></svg></button>
                <button aria-label="Open" class="flex w-6 justify-center"><svg class="size-4"><use href="#open"/></svg></button>
                <button aria-label="Save" class="flex w-6 justify-center"><svg class="size-3.5"><use href="#save"/></svg></button>
                <button aria-label="Save as" class="flex w-6 justify-center"><svg class="size-4"><use href="#saveas"/></svg></button>
                <button aria-label="Plot" class="flex w-6 justify-center"><svg class="size-4"><use href="#print"/></svg></button>
                <button aria-label="Undo" class="flex w-6 justify-center"><svg class="size-4"><use href="#undo"/></svg></button>
                <button aria-label="Undo list" class="flex w-3 justify-center"><svg class="h-1 w-1.5"><use href="#arrow"/></svg></button>
                <button aria-label="Redo" class="flex w-6 justify-center"><svg class="size-4"><use href="#redo"/></svg></button>
                <button aria-label="Redo list" class="flex w-3 justify-center"><svg class="h-1 w-1.5"><use href="#arrow"/></svg></button>
                <button aria-label="Customize toolbar" class="flex w-5 justify-center"><svg class="size-2"><use href="#qatmore"/></svg></button>
            </div>
        </div>
        <h1 class="flex flex-1 justify-center gap-[18px] text-[#1a1a1a]"><span>Autodesk AutoCAD 2018</span><span>1111_AtlasHouse_ElevationA_WIP.dwg</span></h1>
        <div class="flex items-stretch">
            <div class="flex w-[339px] items-center bg-linear-to-b from-[#aaa8ab] to-[#77757a]">
                <button aria-label="Collapse search" class="flex w-3.5 justify-center"><svg class="size-2" viewBox="0 0 8 8"><path d="M2 0l4 4-4 4z" fill="#fff"/></svg></button>
                <input type="text" aria-label="Search help" placeholder="Type a keyword or phrase" class="h-[22px] w-[180px] border border-[#2b2b2b] bg-[#727274] px-0.5 italic placeholder:text-[#c4c4c6]">
                <button aria-label="Search" class="flex w-6 justify-center"><svg class="size-4"><use href="#binoculars"/></svg></button>
                <button class="flex items-center gap-1 pl-1 text-white"><svg class="size-4"><use href="#user"/></svg>mrbond192837<svg class="ml-1 h-1 w-1.5"><use href="#arrow"/></svg></button>
            </div>
            <div class="ml-10 flex w-[107px] items-center bg-linear-to-b from-[#aaa8ab] to-[#77757a] text-white">
                <button aria-label="App store" class="flex w-6 justify-center"><svg class="size-4"><use href="#cart"/></svg></button>
                <button aria-label="A360" class="flex w-[26px] justify-center"><svg class="size-4"><use href="#a360"/></svg></button>
                <svg class="h-1 w-1.5"><use href="#arrow"/></svg>
                <span class="ml-2.5 h-full w-px bg-[#8a888c]"></span>
                <button aria-label="Help" class="ml-2 flex size-4 items-center justify-center rounded-full border border-[#1f2e52] bg-white text-[12px] font-bold text-[#2b5cb8]">?</button>
                <svg class="ml-2 h-1 w-1.5"><use href="#arrow"/></svg>
            </div>
            <div class="flex w-[163px] items-start justify-end gap-9 pr-4 text-[#8a8a8a]">
                <button aria-label="Minimize" class="mt-[2px]"><svg class="size-2.5" viewBox="0 0 10 10"><path d="M0 5.500h10" stroke="currentColor"/></svg></button>
                <button aria-label="Maximize" class="mt-[2px]"><svg class="size-2.5" viewBox="0 0 10 10"><path d="M.5.5h9v9h-9z" fill="none" stroke="currentColor"/></svg></button>
                <button aria-label="Close" class="mt-[2px]"><svg class="size-2.5" viewBox="0 0 10 10"><path d="M0 0l10 10M10 0L0 10" stroke="currentColor"/></svg></button>
            </div>
        </div>
    </header>

    <!-- Menu bar -->
    <nav class="flex h-[22px] shrink-0 items-center gap-[25px] border-y border-[#2c2c2c] bg-linear-to-b from-[#a3a1a4] via-[#838185] to-[#5a585b] pl-[53px] pr-1 text-white">
        <a href="#">File</a><a href="#">Edit</a><a href="#">View</a><a href="#">Insert</a><a href="#">Format</a><a href="#">Tools</a><a href="#">Draw</a><a href="#">Dimension</a><a href="#">Modify</a><a href="#">Parametric</a><a href="#">Window</a><a href="#">Help</a><a href="#">Express</a>
        <div class="ml-auto flex items-center gap-1.5 text-[#222]">
            <button aria-label="Minimize drawing"><svg class="size-2.5" viewBox="0 0 10 10"><path d="M0 8h10" stroke="currentColor" stroke-width="2"/></svg></button>
            <button aria-label="Restore drawing"><svg class="size-3" viewBox="0 0 12 12"><path d="M1 5h7v6H1zM4 5V2h7v6H8" fill="none" stroke="currentColor" stroke-width="1.500"/></svg></button>
            <button aria-label="Close drawing"><svg class="size-2"><use href="#close"/></svg></button>
        </div>
    </nav>

    <!-- Ribbon tabs -->
    <nav class="flex h-5 shrink-0 items-end border-b border-[#2c2c2c] bg-[#535353] pl-1 text-[#cfcfcf]">
        <a href="#" class="h-[18px] w-[50px] rounded-t-sm border border-b-0 border-[#333] bg-linear-to-b from-[#7a7a7c] to-[#626262] text-center text-white">Home</a>
        <div class="flex h-[18px] items-center gap-[21px] pl-[11px]">
            <a href="#">Insert</a><a href="#">Annotate</a><a href="#">Parametric</a><a href="#">View</a><a href="#">Manage</a><a href="#">Output</a><a href="#">Add-ins</a><a href="#">A360</a><a href="#">Express Tools</a><a href="#">Featured Apps</a>
            <button aria-label="Minimize ribbon" class="ml-2.5 flex items-center gap-1.5"><svg class="h-2 w-3.5" viewBox="0 0 14 8"><rect width="14" height="8" rx="2" fill="#e9e9e9"/><path d="M4 5.500h6L7 2z" fill="#333"/></svg><svg class="h-1 w-1.5"><use href="#arrow"/></svg></button>
        </div>
    </nav>

    <!-- Ribbon panels -->
    <div class="flex h-[99px] shrink-0 border-b border-[#8a8a8a] bg-linear-to-b from-[#4c4c4c] to-[#363636] pb-px pl-px">
        <section class="flex w-[224px] flex-col justify-between border-r border-[#3c3c3c] bg-[#5f5f5f]">
            <div class="flex pt-1">
                <button class="flex w-[42px] flex-col items-center pt-0.5"><svg class="mb-1 size-8"><use href="#line"/></svg>Line</button>
                <button class="flex w-11 flex-col items-center pt-0.5"><svg class="mb-1 size-8"><use href="#polyline"/></svg>Polyline</button>
                <button class="flex w-14 flex-col items-center pt-0.5"><svg class="mb-1 size-8"><use href="#circle"/></svg>Circle<svg class="h-1 w-1.5"><use href="#arrow"/></svg></button>
                <button class="flex w-9 flex-col items-center pt-0.5"><svg class="mb-1 size-8"><use href="#arc"/></svg>Arc<svg class="h-1 w-1.5"><use href="#arrow"/></svg></button>
                <div class="ml-2">
                    <button aria-label="Rectangle" class="flex h-6 items-center gap-1.5"><svg class="size-4"><use href="#rect"/></svg><svg class="h-1 w-1.5"><use href="#arrow"/></svg></button>
                    <button aria-label="Ellipse" class="flex h-6 items-center gap-1.5"><svg class="size-4"><use href="#ellipse"/></svg><svg class="h-1 w-1.5"><use href="#arrow"/></svg></button>
                    <button aria-label="Hatch" class="flex h-6 items-center gap-1.5"><svg class="size-4"><use href="#hatch"/></svg><svg class="h-1 w-1.5"><use href="#arrow"/></svg></button>
                </div>
            </div>
            <button class="flex h-[18px] items-center justify-center gap-1.5 bg-linear-to-b from-[#4b4b4b] to-[#585858]">Draw<svg class="h-[5px] w-2"><use href="#arrow"/></svg></button>
        </section>

        <section class="flex w-[250px] flex-col justify-between border-r border-[#3c3c3c] bg-[#5f5f5f]">
            <div class="grid grid-cols-[72px_69px_75px_16px] pl-[7px] pt-1">
                <button class="flex h-6 items-center gap-[5px]"><svg class="size-4"><use href="#move"/></svg>Move</button>
                <button class="flex h-6 items-center gap-[5px]"><svg class="size-4"><use href="#rotate"/></svg>Rotate</button>
                <button class="flex h-6 items-center gap-[5px]"><svg class="size-4"><use href="#trim"/></svg>Trim<svg class="ml-auto mr-3.5 h-1 w-1.5"><use href="#arrow"/></svg></button>
                <button aria-label="Erase" class="flex h-6 items-center"><svg class="size-4"><use href="#erase"/></svg></button>
                <button class="flex h-6 items-center gap-[5px]"><svg class="size-4"><use href="#copy"/></svg>Copy</button>
                <button class="flex h-6 items-center gap-[5px]"><svg class="size-4"><use href="#mirror"/></svg>Mirror</button>
                <button class="flex h-6 items-center gap-[5px]"><svg class="size-4"><use href="#fillet"/></svg>Fillet<svg class="ml-auto mr-3.5 h-1 w-1.5"><use href="#arrow"/></svg></button>
                <button aria-label="Explode" class="flex h-6 items-center"><svg class="size-4"><use href="#explode"/></svg></button>
                <button class="flex h-6 items-center gap-[5px]"><svg class="size-4"><use href="#stretch"/></svg>Stretch</button>
                <button class="flex h-6 items-center gap-[5px]"><svg class="size-4"><use href="#scale"/></svg>Scale</button>
                <button class="flex h-6 items-center gap-[5px]"><svg class="size-4"><use href="#array"/></svg>Array<svg class="ml-auto mr-3.5 h-1 w-1.5"><use href="#arrow"/></svg></button>
                <button aria-label="Offset" class="flex h-6 items-center"><svg class="size-4"><use href="#offset"/></svg></button>
            </div>
            <button class="flex h-[18px] items-center justify-center gap-1.5 bg-linear-to-b from-[#4b4b4b] to-[#585858]">Modify<svg class="h-[5px] w-2"><use href="#arrow"/></svg></button>
        </section>

        <section class="flex w-[189px] flex-col justify-between border-r border-[#3c3c3c] bg-[#5f5f5f]">
            <div class="flex pt-1">
                <button class="flex w-12 flex-col items-center pt-0.5"><svg class="mb-1 size-8"><use href="#text"/></svg>Text<svg class="h-1 w-1.5"><use href="#arrow"/></svg></button>
                <button class="flex w-14 flex-col items-center pt-0.5"><svg class="mb-1 size-8"><use href="#dimension"/></svg>Dimension</button>
                <div class="ml-2">
                    <button class="flex h-6 items-center gap-1.5"><svg class="size-4"><use href="#linear"/></svg>Linear<svg class="h-1 w-1.5"><use href="#arrow"/></svg></button>
                    <button class="flex h-6 items-center gap-1.5"><svg class="size-4"><use href="#leader"/></svg>Leader<svg class="h-1 w-1.5"><use href="#arrow"/></svg></button>
                    <button class="flex h-6 items-center gap-1.5"><svg class="size-4"><use href="#table"/></svg>Table</button>
                </div>
            </div>
            <button class="flex h-[18px] items-center justify-center gap-1.5 bg-linear-to-b from-[#4b4b4b] to-[#585858]">Annotation<svg class="h-[5px] w-2"><use href="#arrow"/></svg></button>
        </section>

        <section class="flex w-[273px] flex-col justify-between border-r border-[#3c3c3c] bg-[#5f5f5f]">
            <div class="flex pt-1">
                <button class="flex w-[62px] flex-col items-center pt-0.5"><svg class="mb-1 size-8"><use href="#layerprops"/></svg><span class="text-center leading-[15px]">Layer<br>Properties</span></button>
                <div>
                    <div class="flex h-6 items-center">
                        <div class="flex h-[22px] w-[208px] items-center gap-1 border border-[#333] bg-linear-to-b from-[#525254] to-[#6b6b6d] pl-1 pr-0.5">
                            <svg class="size-4"><use href="#bulb"/></svg><svg class="size-4"><use href="#sun"/></svg><svg class="size-4"><use href="#unlock"/></svg>
                            <span class="size-3.5 border border-black bg-white"></span>
                            <select aria-label="Layer" class="h-full flex-1 appearance-none"><option>ORIGIN_Building</option></select>
                            <svg class="h-[5px] w-2"><use href="#arrow"/></svg>
                        </div>
                    </div>
                    <div class="flex h-6 items-center">
                        <button aria-label="Off" class="flex w-6 justify-center"><svg class="size-4"><use href="#lay1"/></svg></button>
                        <button aria-label="Isolate" class="flex w-6 justify-center"><svg class="size-4"><use href="#lay2"/></svg></button>
                        <button aria-label="Freeze" class="flex w-6 justify-center"><svg class="size-4"><use href="#lay3"/></svg></button>
                        <button aria-label="Lock" class="flex w-6 justify-center"><svg class="size-4"><use href="#lay4"/></svg></button>
                        <button class="flex items-center gap-[5px] pl-1"><svg class="size-4"><use href="#lay5"/></svg>Make Current</button>
                    </div>
                    <div class="flex h-6 items-center">
                        <button aria-label="Turn all layers on" class="flex w-6 justify-center"><svg class="size-4"><use href="#lay6"/></svg></button>
                        <button aria-label="Unisolate" class="flex w-6 justify-center"><svg class="size-4"><use href="#lay7"/></svg></button>
                        <button aria-label="Thaw all layers" class="flex w-6 justify-center"><svg class="size-4"><use href="#lay8"/></svg></button>
                        <button aria-label="Unlock" class="flex w-6 justify-center"><svg class="size-4"><use href="#lay9"/></svg></button>
                        <button class="flex items-center gap-[5px] pl-1"><svg class="size-4"><use href="#lay10"/></svg>Match Layer</button>
                    </div>
                </div>
            </div>
            <button class="flex h-[18px] items-center justify-center gap-1.5 bg-linear-to-b from-[#4b4b4b] to-[#585858]">Layers<svg class="h-[5px] w-2"><use href="#arrow"/></svg></button>
        </section>

        <section class="flex w-[161px] flex-col justify-between border-r border-[#3c3c3c] bg-[#5f5f5f]">
            <div class="flex pt-1">
                <button class="flex w-11 flex-col items-center pt-0.5"><svg class="mb-1 size-8"><use href="#insert"/></svg>Insert<svg class="h-1 w-1.5"><use href="#arrow"/></svg></button>
                <div>
                    <button class="flex h-6 items-center gap-[5px]"><svg class="size-4"><use href="#blkcreate"/></svg>Create</button>
                    <button class="flex h-6 items-center gap-[5px]"><svg class="size-4"><use href="#blkedit"/></svg>Edit</button>
                    <button class="flex h-6 items-center gap-[5px]"><svg class="size-4"><use href="#blkattr"/></svg>Edit Attributes<svg class="ml-1 h-1 w-1.5"><use href="#arrow"/></svg></button>
                </div>
            </div>
            <button class="flex h-[18px] items-center justify-center gap-1.5 bg-linear-to-b from-[#4b4b4b] to-[#585858]">Block<svg class="h-[5px] w-2"><use href="#arrow"/></svg></button>
        </section>

        <section class="flex w-[265px] flex-col justify-between border-r border-[#3c3c3c] bg-[#5f5f5f]">
            <div class="flex pt-1">
                <button class="flex w-16 flex-col items-center pt-0.5"><svg class="mb-1 size-8"><use href="#matchprops"/></svg><span class="text-center leading-[15px]">Match<br>Properties</span></button>
                <div>
                    <label class="flex h-6 items-center gap-0.5"><svg class="size-4"><use href="#wheel"/></svg>
                        <span class="flex h-[22px] w-[180px] items-center border border-[#333] bg-linear-to-b from-[#525254] to-[#6b6b6d] pl-3 pr-0.5"><span class="mr-2.5 size-4 border border-[#999] bg-white"></span><select aria-label="Object color" class="h-full flex-1 appearance-none"><option>ByLayer</option></select><svg class="h-[5px] w-2"><use href="#arrow"/></svg></span>
                    </label>
                    <label class="flex h-6 items-center gap-0.5"><svg class="size-4"><use href="#weights"/></svg>
                        <span class="flex h-[22px] w-[180px] items-center border border-[#333] bg-linear-to-b from-[#525254] to-[#6b6b6d] pl-2 pr-0.5"><span class="mr-0.5 h-px w-[59px] bg-white"></span><select aria-label="Lineweight" class="h-full flex-1 appearance-none"><option>ByLayer</option></select><svg class="h-[5px] w-2"><use href="#arrow"/></svg></span>
                    </label>
                    <label class="flex h-6 items-center gap-0.5"><svg class="size-4"><use href="#ltypes"/></svg>
                        <span class="flex h-[22px] w-[180px] items-center border border-[#333] bg-linear-to-b from-[#525254] to-[#6b6b6d] pl-1 pr-0.5"><span class="mr-0.5 h-px w-[63px] bg-white"></span><select aria-label="Linetype" class="h-full flex-1 appearance-none"><option>ByLayer</option></select><svg class="h-[5px] w-2"><use href="#arrow"/></svg></span>
                    </label>
                </div>
            </div>
            <div class="flex h-[18px] items-center bg-linear-to-b from-[#4b4b4b] to-[#585858] pr-1"><button class="flex flex-1 items-center justify-center gap-1.5">Properties<svg class="h-[5px] w-2"><use href="#arrow"/></svg></button><button aria-label="Open Properties palette"><svg class="size-2"><use href="#launch"/></svg></button></div>
        </section>

        <section class="flex w-[69px] flex-col justify-between border-r border-[#3c3c3c] bg-[#5f5f5f]">
            <div class="flex pt-1">
                <button class="flex w-[42px] flex-col items-center pt-0.5"><svg class="mb-1 size-8"><use href="#group"/></svg>Group</button>
                <div>
                    <button aria-label="Group edit" class="flex h-6 w-6 items-center justify-center"><svg class="size-4"><use href="#grp1"/></svg></button>
                    <button aria-label="Add or remove" class="flex h-6 w-6 items-center justify-center"><svg class="size-4"><use href="#grp2"/></svg></button>
                    <button aria-label="Group selection" aria-pressed="true" class="flex h-6 w-6 items-center justify-center border border-[#23365f] bg-linear-to-b from-[#6a86bd] to-[#4d6aa5]"><svg class="size-4"><use href="#grp3"/></svg></button>
                </div>
            </div>
            <button class="flex h-[18px] items-center justify-center gap-1.5 bg-linear-to-b from-[#4b4b4b] to-[#585858]">Groups<svg class="h-[5px] w-2"><use href="#arrow"/></svg></button>
        </section>

        <section class="flex w-[97px] flex-col justify-between border-r border-[#3c3c3c] bg-[#5f5f5f]">
            <div class="flex pt-1">
                <button class="flex w-[70px] flex-col items-center pt-0.5"><svg class="mb-1 size-8"><use href="#measure"/></svg>Measure<svg class="h-1 w-1.5"><use href="#arrow"/></svg></button>
                <div>
                    <button aria-label="Quick select" class="flex h-6 w-6 items-center justify-center"><svg class="size-4"><use href="#qselect"/></svg></button>
                    <button aria-label="ID point" class="flex h-6 w-6 items-center justify-center"><svg class="size-4"><use href="#pick"/></svg></button>
                    <button aria-label="Quick calculator" class="flex h-6 w-6 items-center justify-center"><svg class="size-4"><use href="#calc"/></svg></button>
                </div>
            </div>
            <button class="flex h-[18px] items-center justify-center gap-1.5 bg-linear-to-b from-[#4b4b4b] to-[#585858]">Utilities<svg class="h-[5px] w-2"><use href="#arrow"/></svg></button>
        </section>

        <section class="flex w-20 flex-col justify-between border-r border-[#3c3c3c] bg-[#5f5f5f]">
            <div class="flex pt-1">
                <button class="flex w-[54px] flex-col items-center pt-0.5"><svg class="mb-1 size-8"><use href="#paste"/></svg>Paste<svg class="h-1 w-1.5"><use href="#arrow"/></svg></button>
                <div>
                    <button aria-label="Cut" class="flex h-6 w-6 items-center justify-center"><svg class="size-4"><use href="#cut"/></svg></button>
                    <button aria-label="Copy clip" class="flex h-6 w-6 items-center justify-center"><svg class="size-4"><use href="#copyclip"/></svg></button>
                </div>
            </div>
            <div class="flex h-[18px] items-center justify-center bg-linear-to-b from-[#4b4b4b] to-[#585858]">Clipboard</div>
        </section>

        <section class="flex w-[61px] flex-col justify-between bg-[#5f5f5f]">
            <div class="flex justify-center pt-1">
                <button class="flex flex-col items-center pt-0.5"><svg class="mb-1 size-8"><use href="#base"/></svg>Base<svg class="h-1 w-1.5"><use href="#arrow"/></svg></button>
            </div>
            <div class="flex h-[18px] items-center justify-center gap-1.5 bg-linear-to-b from-[#4b4b4b] to-[#585858]"><span>View</span><svg class="h-[5px] w-2"><use href="#arrow"/></svg><svg class="size-2"><use href="#launch"/></svg></div>
        </section>
    </div>

    <!-- File tabs -->
    <nav class="flex h-[25px] shrink-0 items-end bg-[#363636] pl-4 text-[#a9a9a9]">
        <a href="#" class="flex h-[22px] w-[127px] items-center rounded-tl-lg rounded-tr-xl bg-linear-to-b from-[#4f4f4f] to-[#565656] pl-4">Start</a>
        <a href="#" class="flex h-[22px] w-[221px] items-center justify-between rounded-tl-lg rounded-tr-xl bg-linear-to-b from-[#777577] to-[#5c5c5e] pl-[11px] pr-3 text-white">1111_AtlasHouse_ElevationA_WIP*<svg class="size-2 text-[#3a3a3a]"><use href="#close"/></svg></a>
        <a href="#" class="ml-0.5 flex h-[22px] w-[216px] items-center justify-between rounded-tl-lg rounded-tr-xl bg-linear-to-b from-[#4f4f4f] to-[#565656] pl-2 pr-3.5">908_Kensington_ElevationA_WIP*<svg class="size-2 text-[#333]"><use href="#close"/></svg></a>
        <button aria-label="New drawing" class="mb-1 ml-1 flex h-[15px] w-[21px] items-center justify-center rounded-tr-lg rounded-bl-lg bg-[#555]"><svg class="size-2" viewBox="0 0 8 8"><path d="M4 0v8M0 4h8" stroke="#ddd" stroke-width="2"/></svg></button>
    </nav>
    <div class="h-1 shrink-0 bg-[#5a5a5e]"></div>

    <main class="flex min-h-0 flex-1">
        <!-- Point cloud manager -->
        <aside class="flex w-[328px] shrink-0 flex-col pr-0.5">
            <h2 class="flex h-6 shrink-0 items-center rounded bg-[#535353] pb-1 pl-[5px]"><span class="mr-1.5 h-2.5 w-[3px] border-x border-dotted border-[#333]"></span>POINT CLOUD MANAGER</h2>
            <div class="flex h-6 shrink-0 items-center gap-3 border border-l-0 border-[#3a3a3a] bg-[#565656] pl-[5px] pr-[5px]">
                <h3 class="mr-auto font-bold">Regions and Scans</h3>
                <button aria-label="List view"><svg class="size-3"><use href="#listview"/></svg></button>
                <button aria-label="Tree view"><svg class="h-3.5 w-3"><use href="#treeview"/></svg></button>
            </div>
            <ul id="scanTree" class="flex-1"></ul>
            <label class="mb-[5px] flex h-[17px] shrink-0 items-center border border-[#3a3a3a] pl-[3px]"><svg class="size-3.5"><use href="#magnifier"/></svg><input type="text" aria-label="Search scans" placeholder="Search" class="h-full flex-1 placeholder:text-[#909090]"></label>
        </aside>

        <!-- Drawing area -->
        <section class="relative min-w-0 flex-1 overflow-hidden bg-[#21252e]">
            <p class="px-[3px] pt-1.5 text-[12px]">[&minus;][Custom View][Hidden]</p>
            <svg class="absolute inset-0 size-full" fill="none" stroke="#f4f4f4" shape-rendering="crispEdges">
                <path d="M0 109.500H360M360 110.500H902M902 111.500H1484M1484 112.500H1502"/>
                <path d="M0 223.500H470M470 224.500H1036M1036 225.500H1580"/>
                <path d="M0 303.500H288M288 304.500H856M856 305.500H1426M1426 306.500H1636"/>
                <path d="M0 445.500H574M574 446.500H1142M1142 447.500H1636"/>
                <path d="M104 446L160 484.500L159.500 732M482 446L426.500 484.500V732M589 446L644.500 484.500V732M965 447L912 484.500L911.500 733"/>
                <path d="M0 751.500H272M272 752.500H740M740 753.500H1042"/>
                <path d="M0 815.500H324M324 816.500H794M794 817.500H1042"/>
                <path d="M0 900.500H220M220 901.500H688M688 902.500H1042"/>
                <!-- crosshair -->
                <path d="M974 733.500H1091M1112 733.500H1230M1101.500 606V723M1101.500 744V862M1091.500 723.500h20v20h-20z"/>
            </svg>
            <!-- UCS icon -->
            <svg class="absolute bottom-9 left-10 h-20 w-20" viewBox="0 0 80 80">
                <path d="M7 18a3 3 0 0 1 6 0v45H7z" fill="#5cad52"/><path d="M12 60h44a2.500 2.500 0 0 1 0 5H10z" fill="#c0484f"/><circle cx="9.500" cy="62.500" r="2.500" fill="#4d8fe0"/>
                <g font-family="Noto Sans" font-size="16" font-weight="300"><text x="8" y="13" fill="#3fae3d">Y</text><text x="55" y="61" fill="#b5322f">X</text><text x="8" y="61" fill="#2468c8">Z</text></g>
            </svg>
            <!-- ViewCube -->
            <div class="absolute right-3 top-14 flex w-[140px] flex-col items-center">
                <svg class="h-[60px] w-full" viewBox="0 0 140 60"><ellipse cx="70" cy="55" rx="60" ry="4.500" fill="none" stroke="#4a4c54" stroke-width="2.500"/><path d="M4 54l9-1M69 59l18-1M122 53h16" stroke="#c6c8d0" stroke-width="1.500"/><path d="M44.500.5h51v51h-51z" fill="#b4b2b9" stroke="#85858c"/><path d="M54 10h32v32H54z" fill="#a6a9b2"/><text x="70" y="30" text-anchor="middle" font-family="Noto Sans" font-size="12" font-weight="700" fill="#4a4b54">TOP</text></svg>
                <button class="mt-[53px] flex h-[18px] w-[68px] items-center justify-between rounded border border-[#6c6e78] bg-[#a2a5b0] px-[3px] text-[10px] text-[#4b4d59]">Unnamed<svg class="size-2" viewBox="0 0 8 8"><path d="M0 1h8L4 6z" fill="none" stroke="#c9cbd4"/></svg></button>
            </div>
        </section>

        <!-- Right palettes -->
        <aside class="flex w-[365px] shrink-0 flex-col pl-0.5">
            <h2 class="mt-0.5 flex h-5 shrink-0 items-center bg-[#535353] pb-0.5 pl-[6px]"><span class="mr-[7px] h-2.5 w-[3px] border-x border-dotted border-[#333]"></span>PROPERTIES</h2>
            <div class="mt-3 flex h-[23px] shrink-0 items-center pl-[6px] pr-2">
                <div class="flex h-full w-[275px] items-center border border-[#333] bg-linear-to-b from-[#58565a] to-[#757377]"><select aria-label="Selection" class="h-full flex-1 appearance-none border-r border-[#333] pl-[3px]"><option>No selection</option></select><svg class="mx-[3px] h-1 w-1.5"><use href="#arrow"/></svg></div>
                <button aria-label="Toggle PICKADD" class="ml-auto"><svg class="size-4"><use href="#pickadd"/></svg></button>
                <button aria-label="Select objects" class="ml-2.5"><svg class="size-3.5"><use href="#pick"/></svg></button>
                <button aria-label="Quick select" class="ml-2.5"><svg class="size-4"><use href="#qselect"/></svg></button>
            </div>
            <div class="mt-1 flex h-[522px] shrink-0 justify-between overflow-hidden pl-2.5 pr-0.5">
                <div id="propertyGroups" class="w-[336px]"></div>
                <div class="h-[496px] w-[5px] rounded bg-[#474747]"></div>
            </div>
            <div class="mt-2.5 flex min-h-0 flex-1 border-t border-[#4c4c4c]">
                <nav id="paletteTabs" class="w-[21px] shrink-0 pt-6"></nav>
                <div class="min-w-0 flex-1">
                    <h2 class="mt-0.5 flex h-5 items-center bg-[#535353] pl-[5px]"><span class="mr-[7px] h-2.5 w-[3px] border-x border-dotted border-[#333]"></span>TOOL PALETTES - ALL PALETTES</h2>
                    <div id="toolList" class="flex flex-col pt-1.5"></div>
                </div>
            </div>
        </aside>
    </main>

    <!-- Layout tabs and status bar -->
    <footer class="relative flex h-[29px] shrink-0 items-start border-t border-[#555] bg-[#373737] pl-2">
        <nav class="flex items-start text-[#b5b5b5]">
            <a href="#" class="h-[17px] w-[61px] rounded-b-xl bg-linear-to-b from-[#616161] to-[#8a8a8a] text-center font-bold text-white">Model</a>
            <a href="#" class="h-[17px] w-[37px] rounded-b-xl bg-[#555] text-center">A0</a>
            <a href="#" class="h-[17px] w-[37px] rounded-b-xl bg-[#555] text-center">A1</a>
            <a href="#" class="h-[17px] w-[37px] rounded-b-xl bg-[#555] text-center">A3</a>
            <button aria-label="New layout" class="ml-1 flex h-4 w-[22px] items-center justify-center rounded-br-xl rounded-bl-lg bg-[#555]"><svg class="size-2" viewBox="0 0 8 8"><path d="M4 0v8M0 4h8" stroke="#ccc" stroke-width="2"/></svg></button>
        </nav>
        <div class="ml-auto mr-[60px] flex h-[26px] items-stretch text-white">
            <button class="w-[50px] border border-[#7a7a7a] bg-[#4a4a4a] text-[12px]">MODEL</button>
            <div class="flex w-[66px] items-center gap-2 border border-[#7a7a7a] bg-[#4a4a4a] pl-1"><svg class="size-4"><use href="#sGrid"/></svg><svg class="size-4"><use href="#sSnap"/></svg><svg class="h-[5px] w-1.5"><use href="#arrow"/></svg></div>
            <div class="flex w-[103px] items-center gap-2 border border-[#7a7a7a] bg-[#4a4a4a] pl-1"><svg class="size-4"><use href="#sOrtho"/></svg><svg class="size-4"><use href="#sPolar"/></svg><svg class="h-[5px] w-1.5"><use href="#arrow"/></svg><svg class="size-4"><use href="#sIso"/></svg><svg class="h-[5px] w-1.5"><use href="#arrow"/></svg></div>
            <div class="flex w-[67px] items-center gap-2 border border-[#7a7a7a] bg-[#4a4a4a] pl-1"><svg class="size-4"><use href="#sTrack"/></svg><svg class="size-4"><use href="#sOsnap"/></svg><svg class="h-[5px] w-1.5"><use href="#arrow"/></svg></div>
            <div class="flex w-[107px] items-center gap-2 border border-[#7a7a7a] bg-[#4a4a4a] pl-1"><svg class="size-4 text-[#3a94f5]"><use href="#sAnnoVis"/></svg><svg class="size-4 text-[#d4d4d4]"><use href="#sAnnoAuto"/></svg><svg class="size-4 text-[#d4d4d4]"><use href="#sAnno"/></svg><span class="flex items-center gap-1">1:1<svg class="h-[5px] w-1.5"><use href="#arrow"/></svg></span></div>
            <div class="flex w-10 items-center gap-2 border border-[#7a7a7a] bg-[#4a4a4a] pl-1"><svg class="size-4"><use href="#sGear"/></svg><svg class="h-[5px] w-1.5"><use href="#arrow"/></svg></div>
            <div class="flex w-[26px] items-center justify-center border border-[#7a7a7a] bg-[#4a4a4a]"><svg class="size-4"><use href="#sPlus"/></svg></div>
            <div class="flex w-[27px] items-center justify-center border border-[#7a7a7a] bg-[#4a4a4a]"><svg class="size-4"><use href="#sIsolate"/></svg></div>
            <div class="flex w-[27px] items-center justify-center border border-[#7a7a7a] bg-[#4a4a4a]"><svg class="size-[18px]"><use href="#sPerf"/></svg></div>
            <div class="flex w-[43px] items-center gap-1.5 border border-[#7a7a7a] bg-[#4a4a4a] pl-1"><svg class="size-4"><use href="#sTrust"/></svg><span class="h-4 w-4 rounded-sm border-2 border-[#ccc] bg-[#333]"></span></div>
        </div>

        <!-- Command window floats over the drawing -->
        <section class="absolute bottom-px left-[1191px] z-10 flex h-28 w-[624px] rounded-sm border border-[#77767c] bg-[#97959a] font-['Liberation_Mono',monospace] text-[12px] leading-[15px] text-[#111]">
            <div class="flex w-[22px] flex-col items-center gap-2.5 bg-linear-to-b from-[#737278] to-[#3a3a3d] pt-1 text-[#d8d8dc]">
                <span class="h-1.5 w-4 border-y-2 border-dotted border-[#9a999f]"></span>
                <button aria-label="Close command line"><svg class="size-2.5"><use href="#close"/></svg></button>
                <button aria-label="Customize"><svg class="size-3.5"><use href="#wrench"/></svg></button>
            </div>
            <div class="flex flex-1 flex-col border-l border-[#77767c]">
                <div class="flex-1 whitespace-pre pl-px pt-[11px]">Automatic save to C:\Users\Origin Surveys Comp4\appdata\local\temp
\1111_AtlasHouse_ElevationA_WIP_1_13780_0016.sv$ ...
Command:
Command: _u TEXTEDIT
Command: _u EXTEND</div>
                <div class="flex h-[23px] items-center border-t border-[#5f5e64] bg-[#c4c2c6] pl-[5px] pr-[3px]">
                    <svg class="h-[13px] w-3.5" viewBox="0 0 14 13"><rect x=".5" y=".5" width="13" height="12" rx="1" fill="#b3b2b8" stroke="#6c6b72"/><path d="M3 3l3 3-3 3M7 10h4" fill="none" stroke="#333"/></svg>
                    <svg class="ml-1 h-1 w-1.5 text-[#555]"><use href="#arrow"/></svg>
                    <input type="text" aria-label="Command" placeholder="Type a command" class="ml-1.5 h-full flex-1 italic placeholder:text-[#6e6e74]">
                    <svg class="h-[5px] w-2 rotate-180"><use href="#arrow"/></svg>
                </div>
            </div>
        </section>

        <!-- Page curl watermark -->
        <div class="absolute -bottom-3 right-0 z-10 h-16 w-32">
            <svg class="absolute inset-0 size-full" viewBox="0 0 128 64"><path d="M10 64C60 48 100 34 126 21h2v43z" fill="#141417"/><path d="M0 64C50 45 92 22 105 0c3 11 11 19 21 21C98 40 50 50 0 64z" fill="url(#gC)" stroke="#555" stroke-width=".5"/></svg>
            <div class="absolute bottom-1 right-0.5 flex items-center gap-1 text-right text-[10px] leading-[9px] text-white"><svg class="h-[15px] w-[15px]" viewBox="0 0 15 15"><rect width="15" height="15" fill="#d4283a"/><path d="M4 14V5a3.500 3.500 0 1 1 4 5" fill="none" stroke="#fff" stroke-width="1.500"/><circle cx="7.500" cy="6" r="1" fill="#fff"/></svg><span>Screenpresso<br>.com</span></div>
        </div>
    </footer>

    <!-- Desktop behind the window -->
    <div class="flex h-3 shrink-0 bg-linear-to-r from-[#2c2a30] via-[#1d1b20] to-[#28252b]">
        <div class="ml-20 h-full w-10 -skew-x-12 bg-[#6f6b70]"></div>
        <div class="ml-[1388px] flex-1 border-b-[5px] border-l-[5px] border-[#c1bfc2] bg-[#2c2836]"></div>
    </div>

    <script>
        // Point cloud tree
        const scanTree = document.getElementById('scanTree');
        const hiddenScans = [1, 2, 3, 27];

        const box = '<svg class="h-2 w-2 shrink-0" viewBox="0 0 8 8"><path d="M1 2.500h6v3H1z" fill="#999" stroke="#2e2e2e"/></svg>';
        let treeHtml = `
            <li class="flex h-5 items-center pl-1 pr-1">${box}<svg class="ml-2 h-3.5 w-4"><use href="#scanfile"/></svg><span class="ml-[3px] flex-1">1111 Atlas House</span><svg class="size-3"><use href="#ringHalf"/></svg></li>
            <li class="flex h-5 items-center pl-[27px] pr-1"><svg class="h-5 w-[11px]"><path d="M.5 0v20M0 10.500h5" stroke="#333"/></svg><svg class="size-4"><use href="#regions"/></svg><span class="ml-1 flex-1">Regions</span><svg class="size-3"><use href="#ringDim"/></svg></li>
            <li class="flex h-5 items-center pl-[27px]"><svg class="h-5 w-2.5"><path d="M.5 0v20M0 10.500h5" stroke="#333"/></svg><span class="flex h-5 flex-1 items-center border border-[#3a3a3a] bg-linear-to-b from-[#8b898c] to-[#6e6c6f] pr-[3px] text-white"><svg class="size-4"><use href="#points"/></svg><span class="ml-1 flex-1">Unassigned Points</span><svg class="size-3"><use href="#ringOff"/></svg></span></li>
            <li class="flex h-5 items-center pl-6 pr-1">${box}<svg class="ml-2 size-4"><use href="#scans"/></svg><span class="ml-[3px] flex-1">Scans</span><svg class="size-3"><use href="#ringHalf"/></svg></li>`;

        for (let i = 1; i <= 27; i++) {
            const guide = i === 27 ? 'M.5 0v10.500M0 10.500h5' : 'M.5 0v20M0 10.500h5';
            const ring = hiddenScans.includes(i) ? '#ringOff' : '#ringOn';
            treeHtml += `<li class="flex h-5 items-center pl-[46px] pr-1"><svg class="h-5 w-[15px]"><path d="${guide}" stroke="#333" fill="none"/></svg><svg class="size-3"><use href="#scan"/></svg><span class="ml-1 flex-1">${i}</span><svg class="size-3"><use href="${ring}"/></svg></li>`;
        }
        scanTree.innerHTML = treeHtml;

        // Property palette groups, third value marks read-only rows
        const groups = [
            ['General', [
                ['Color', '<span class="mr-[7px] inline-block size-2.5 border border-black bg-white align-[-1px]"></span>ByLayer'],
                ['Layer', 'ORIGIN_Building'],
                ['Linetype', '<span class="mr-1.5 ml-[3px] inline-block h-px w-[62px] bg-white align-middle"></span>ByLayer'],
                ['Linetype scale', '1'],
                ['Lineweight', '<span class="mr-1 inline-block h-px w-[65px] bg-white align-middle"></span>ByLayer'],
                ['Transparency', 'ByLayer'],
                ['Thickness', '0']
            ]],
            ['3D Visualization', [['Material', 'ByLayer']]],
            ['Plot style', [
                ['Plot style', 'ByColor', true],
                ['Plot style table', 'None'],
                ['Plot table attached to', 'Model', true],
                ['Plot table type', 'Not available', true]
            ]],
            ['View', [
                ['Center X', '64.3423', true],
                ['Center Y', '24.5866', true],
                ['Center Z', '0', true],
                ['Height', '0.5327', true],
                ['Width', '0.9273', true]
            ]],
            ['Misc', [
                ['Annotation scale', '1:1'],
                ['UCS icon On', 'Yes'],
                ['UCS icon at origin', 'Yes'],
                ['UCS per viewport', 'Yes'],
                ['UCS Name', '']
            ]]
        ];

        document.getElementById('propertyGroups').innerHTML = groups.map(([title, rows]) => `
            <button class="flex h-5 w-full items-center justify-between border border-[#333] bg-[#484848] pl-1.5 pr-[7px] font-bold text-white">${title}<span class="h-0.5 w-1.5 bg-white"></span></button>
            <table class="mb-0.5 ml-[17px] w-[318px] table-fixed border-collapse">
                ${rows.map(([name, value, readOnly]) => `
                <tr class="h-[19px] border-b border-[#505050]">
                    <th class="w-[147px] border-x border-[#505050] pl-1.5 text-left font-normal leading-4">${name}</th>
                    <td class="border-r border-[#505050] pl-0.5 leading-4 ${readOnly ? 'text-[#a9a9a9]' : ''}">${value}</td>
                </tr>`).join('')}
            </table>`).join('');

        // Tool palettes
        const tabs = ['Modeli...', 'New Pa...', 'Constra...', 'Origin', 'Origin', 'Annota...', 'Archite...', 'Mecha...'];
        document.getElementById('paletteTabs').innerHTML = tabs.map((tab, i) => `
            <button class="flex h-[57px] w-full items-center justify-center rounded-l-md border-b border-l border-[#3a3a3a] ${i === 0 ? 'border-t text-white' : 'border-r bg-[#555] text-[#a6a6a6]'}"><span class="rotate-180 [writing-mode:vertical-rl]">${tab}</span></button>`).join('')
            + '<div class="ml-0.5 h-[5px] border-b border-[#333]"></div><div class="ml-0.5 h-[5px] border-b border-[#333]"></div><div class="ml-0.5 h-[5px] border-b border-[#333]"></div>';

        const tools = [
            ['#tHelix', 'Cylindrical Helix'],
            ['#tSpiral', '2D Spiral'],
            ['#tEllip', 'Elliptical Cylinder'],
            ['#tCone', 'Frustum Cone'],
            ['#tPyramid', 'Frustum Pyramid'],
            ['#tUcs', 'UCS'],
            ['#tUcsPrev', 'UCS Previous'],
            ['#tAlign', '3D Align']
        ];
        document.getElementById('toolList').innerHTML = tools.map(([icon, name]) => `
            <button class="flex h-[42px] items-center gap-[7px] pl-[7px]"><svg class="size-7"><use href="${icon}"/></svg>${name}</button>`).join('');
    </script>
</body>
</html>
